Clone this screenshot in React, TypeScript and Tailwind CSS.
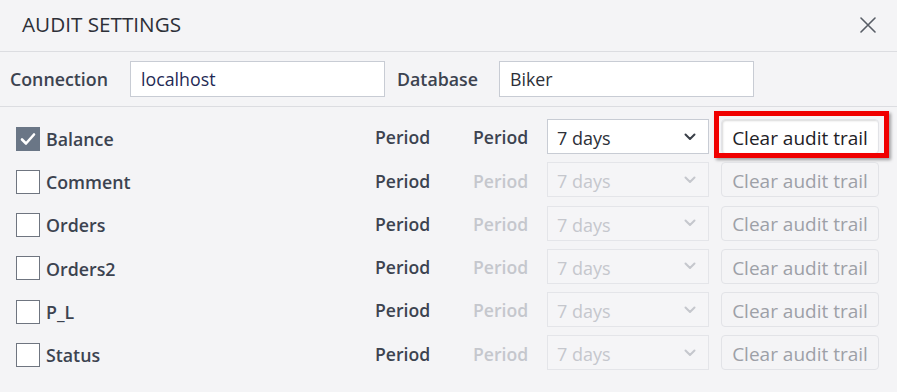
import React from "react";

const rows = [
  { name: "Balance", on: true },
  { name: "Comment", on: false },
  { name: "Orders", on: false },
  { name: "Orders2", on: false },
  { name: "P_L", on: false },
  { name: "Status", on: false },
];

function Chevron({ color }: { color: string }) {
  return (
    <svg width="12" height="8" viewBox="0 0 12 8" fill="none">
      <path d="M1.5 1.5 L6 6 L10.5 1.5" stroke={color} strokeWidth="2" strokeLinecap="round" strokeLinejoin="round" />
    </svg>
  );
}

export default function App() {
  return (
    <div
      className="w-[897px] h-[392px] bg-[#f4f4f6] overflow-hidden text-[#3c4350]"
      style={{ fontFamily: '"Open Sans", "Noto Sans", sans-serif' }}
    >
      <div className="h-[52px] flex items-center justify-between border-b border-[#dcdde1] pl-[22px] pr-[21px]">
        <div className="text-[20.7px] text-[#2d3038] -mt-[1px]">AUDIT SETTINGS</div>
        <svg width="16" height="16" viewBox="0 0 16 16" fill="none" className="-mt-[1px]">
          <path d="M1 1 L15 15 M15 1 L1 15" stroke="#585d66" strokeWidth="1.6" strokeLinecap="round" />
        </svg>
      </div>
      <div className="h-[55px] flex items-center border-b border-[#dcdde1] pl-[10px]">
        <div className="w-[120px] text-[17.8px] font-semibold">Connection</div>
        <div className="w-[255px] h-[36px] bg-white border border-[#c8ccd4] flex items-center pl-[10px] text-[17.8px] text-[#1f2a55]">
          localhost
        </div>
        <div className="w-[114px] pl-[12px] text-[17.8px] font-semibold">Database</div>
        <div className="w-[255px] h-[36px] bg-white border border-[#c8ccd4] flex items-center pl-[10px] text-[17.8px] text-[#2d3038]">
          Biker
        </div>
      </div>
      <div className="pt-[12px] flex flex-col">
        {rows.map((r) => (
          <div key={r.name} className="h-[43.3px] flex items-start">
            <div className="w-[375px] h-[35px] flex items-center pl-[16px]">
              {r.on ? (
                <div className="w-[24px] h-[24px] bg-[#6a7686] flex items-center justify-center mt-[4px]">
                  <svg width="16" height="14" viewBox="0 0 16 14" fill="none">
                    <path d="M2 7.5 L6 11.5 L14 2.5" stroke="white" strokeWidth="2.6" strokeLinecap="round" strokeLinejoin="round" />
                  </svg>
                </div>
              ) : (
                <div className="w-[24px] h-[24px] bg-white border border-[#6f7580] mt-[4px]" />
              )}
              <div className="ml-[6px] text-[17.8px] font-semibold mt-[5px]">{r.name}</div>
            </div>
            <div className="w-[98px] h-[35px] flex items-center text-[17.6px] font-semibold mt-[1px]">Period</div>
            <div
              className={
                "w-[74px] h-[35px] flex items-center text-[17.6px] font-semibold mt-[1px] " +
                (r.on ? "text-[#3c4350]" : "text-[#c5c7cd]")
              }
            >
              Period
            </div>
            <div
              className={
                "w-[162px] h-[35px] border flex items-center justify-between pl-[9px] pr-[12px] text-[18px] " +
                (r.on ? "bg-white border-[#c8ccd4] text-[#2d3038]" : "bg-[#f5f5f7] border-[#e4e5e9] text-[#c5c7cd]")
              }
            >
              <span className="mt-[4px]">7 days</span>
              <Chevron color={r.on ? "#3a3f48" : "#c5c7cd"} />
            </div>
            <div className="relative ml-[12px]">
              {r.on && (
                <div className="absolute left-[-7px] top-[-8px] w-[175px] h-[47px] border-[5px] border-[#f00000] shadow-[2px_2px_3px_rgba(0,0,0,0.35)]" />
              )}
              <div
                className={
                  "w-[158px] h-[35px] rounded-[4px] border flex items-center justify-center text-[19px] " +
                  (r.on
                    ? "bg-white border-[#e2e3e7] text-[#1e2126] shadow-[inset_1px_1px_2px_rgba(0,0,0,0.15)]"
                    : "bg-[#f4f4f6] border-[#e2e3e7] text-[#9da0a7]")
                }
              >
                <span className="mt-[3px]">Clear audit trail</span>
              </div>
            </div>
          </div>
        ))}
      </div>
    </div>
  );
}
